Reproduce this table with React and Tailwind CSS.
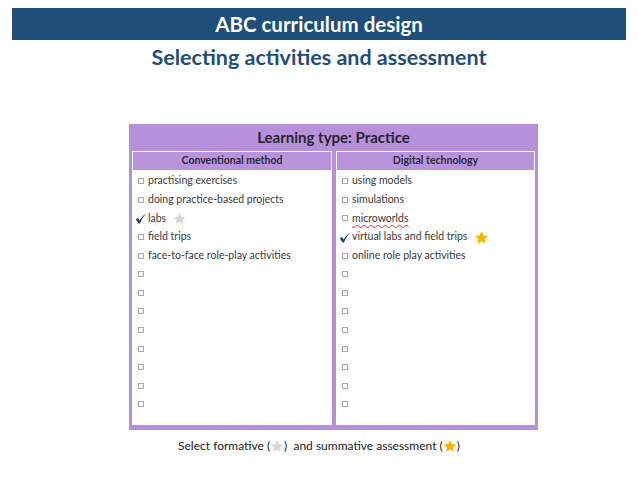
import React from "react";

const Star = ({ color, size = 13 }) => (
  <svg width={size} height={size} viewBox="0 0 24 24" className="inline-block">
    <path d="M12 1.5l3.1 7.1 7.7.7-5.8 5.1 1.7 7.6L12 18l-6.7 4 1.7-7.6L1.2 9.3l7.7-.7z" fill={color} />
  </svg>
);

const Check = () => (
  <svg width="12" height="11" viewBox="0 0 12 11" className="block">
    <path d="M0.8 6.2 L3 5 L4.6 7.6 C6.5 4.5 8.6 2 11.5 0.6 C9 2.8 6.8 6 5 10.4 L3.6 10.4 Z" fill="#1f3f66" />
  </svg>
);

const Box = () => <div className="w-[6px] h-[6px] border border-[#a8a8a8] bg-white shrink-0" />;

function Row({ text, checked, star, underline }) {
  return (
    <div className="h-[18.6px] flex items-center">
      <div className="w-[14px] flex items-center justify-start pl-[4px]">
        {checked ? <div className="-ml-[3px]"><Check /></div> : <Box />}
      </div>
      {text && (
        <span
          className={
            "text-[10.5px] text-[#3a3a3a] whitespace-nowrap " +
            (underline ? "underline decoration-wavy decoration-[#e05a5a] underline-offset-2" : "")
          }
        >
          {text}
        </span>
      )}
      {star && <span className="ml-[7px] flex items-center">{star}</span>}
    </div>
  );
}

function Column({ title, items }) {
  const rows = [...items];
  while (rows.length < 13) rows.push({});
  return (
    <div className="flex flex-col bg-white border border-white">
      <div className="h-[18px] bg-[#b994dc] flex items-center justify-center text-[10.5px] font-bold text-[#2a2a3a]">
        {title}
      </div>
      <div className="pt-[2px] pl-[1px]">
        {rows.map((r, i) => (
          <Row key={i} {...r} />
        ))}
      </div>
    </div>
  );
}

export default function App() {
  return (
    <div className="w-[638px] h-[479px] bg-white pt-[8px]" style={{ fontFamily: "Lato, 'Open Sans', sans-serif" }}>
      <div className="mx-[12px] h-[32px] bg-[#1f4e79] flex items-center justify-center text-white text-[20.5px] font-bold">
        ABC curriculum design
      </div>
      <div className="h-[34px] flex items-center justify-center text-[#1f4e79] text-[21.5px] font-bold">
        Selecting activities and assessment
      </div>
      <div className="ml-[129px] mt-[50px] w-[409px] bg-[#b690da] px-[3px] pb-[5px]">
        <div className="h-[27px] flex items-center justify-center text-[15px] font-bold text-[#262633]">
          Learning type: Practice
        </div>
        <div className="grid grid-cols-[200px_199px] gap-[4px] h-[274px]">
          <Column
            title="Conventional method"
            items={[
              { text: "practising exercises" },
              { text: "doing practice-based projects" },
              { text: "labs", checked: true, star: <Star color="#d4d4d4" size={13} /> },
              { text: "field trips" },
              { text: "face-to-face role-play activities" },
            ]}
          />
          <Column
            title="Digital technology"
            items={[
              { text: "using models" },
              { text: "simulations" },
              { text: "microworlds", underline: true },
              { text: "virtual labs and field trips", checked: true, star: <Star color="#f7b500" size={15} /> },
              { text: "online role play activities" },
            ]}
          />
        </div>
      </div>
      <div className="mt-[7px] flex items-center justify-center text-[12px] text-[#222]">
        <span>Select formative (</span>
        <Star color="#d9d9d9" size={14} />
        <span>)&nbsp; and summative assessment (</span>
        <Star color="#f7b500" size={14} />
        <span>)</span>
      </div>
    </div>
  );
}
